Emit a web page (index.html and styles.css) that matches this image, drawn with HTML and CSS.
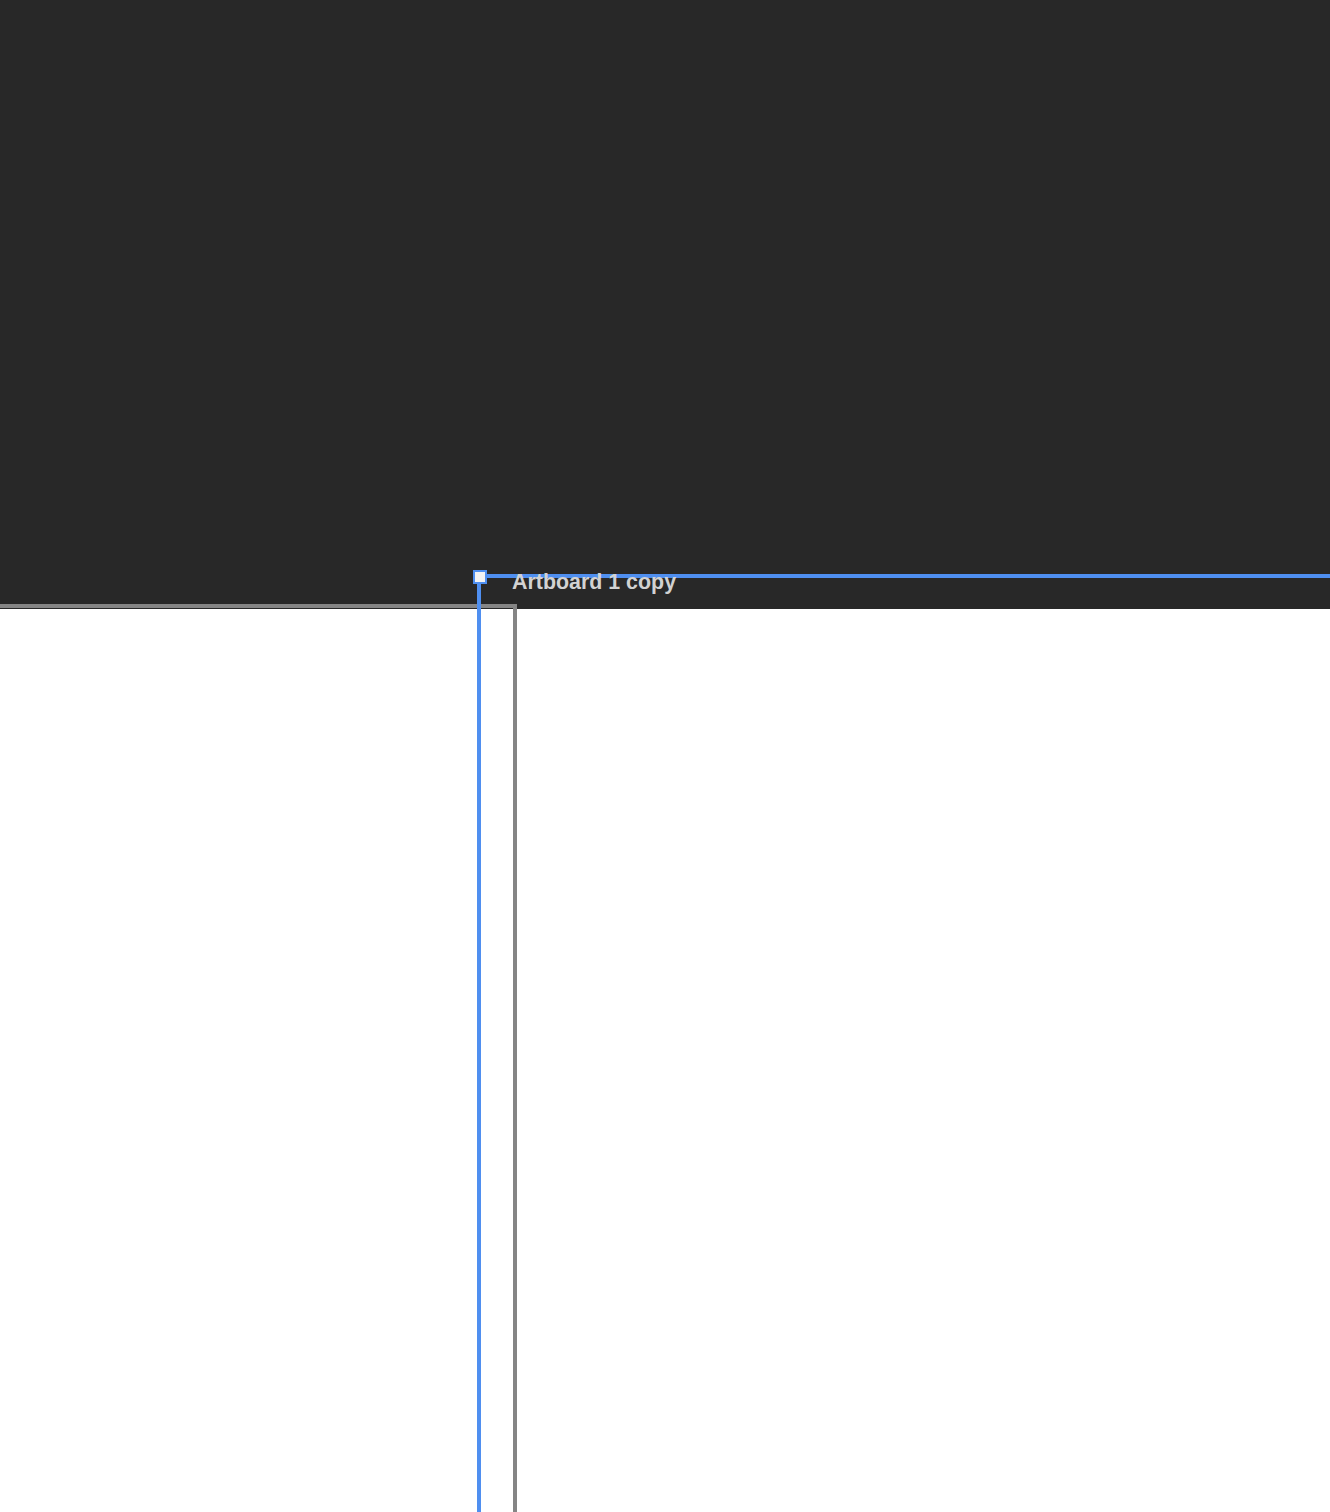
FILE: index.html
```html
<!DOCTYPE html>
<html lang="en">
<head>
<meta charset="utf-8">
<title>Artboard 1 copy</title>
<link rel="stylesheet" href="styles.css">
</head>
<body>
<div class="workspace">
  <div class="pasteboard"></div>
  <div class="canvas"></div>
  <div class="artboard artboard-left"></div>
  <div class="selection"></div>
  <div class="handle"></div>
  <div class="artboard-label">Artboard 1 copy</div>
</div>
</body>
</html>
```
FILE: styles.css
```css
html, body {
  margin: 0;
  padding: 0;
  background: #ffffff;
  overflow: hidden;
}
.workspace {
  position: relative;
  width: 1330px;
  height: 1512px;
  display: flex;
  flex-direction: column;
  overflow: hidden;
}
.pasteboard {
  height: 609px;
  background: #282828;
  flex: none;
}
.canvas {
  flex: 1;
  background: #ffffff;
}
.artboard-left {
  position: absolute;
  left: -20px;
  top: 604px;
  width: 533px;
  height: 1200px;
  border-top: 4px solid #858585;
  border-right: 4px solid #858585;
}
.selection {
  position: absolute;
  left: 477px;
  top: 574px;
  width: 1000px;
  height: 1200px;
  border-top: 4px solid #4f8ff0;
  border-left: 4px solid #4f8ff0;
}
.handle {
  position: absolute;
  left: 473px;
  top: 570px;
  width: 10px;
  height: 10px;
  border: 2px solid #4f8ff0;
  background: #f2f2f2;
}
.artboard-label {
  position: absolute;
  left: 512px;
  top: 572px;
  font-family: "Liberation Sans", Arial, sans-serif;
  font-weight: bold;
  font-size: 21.4px;
  line-height: 21px;
  color: #d2d2d2;
  white-space: nowrap;
}
```
